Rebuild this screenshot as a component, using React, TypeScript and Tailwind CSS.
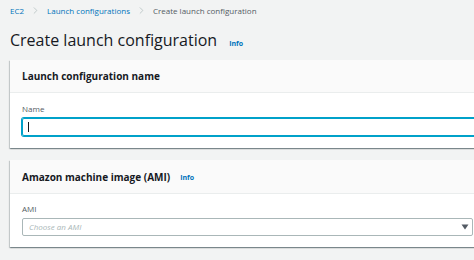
import { ChevronRight } from "lucide-react";

function Info() {
  return <span className="text-[7px] font-bold text-[#0073bb] leading-none">Info</span>;
}

const cardShadow =
  "bg-white shadow-[0_1px_1px_0_rgba(0,28,36,0.3),1px_1px_1px_0_rgba(0,28,36,0.15),-1px_1px_1px_0_rgba(0,28,36,0.15)]";

export default function App() {
  return (
    <div
      className="w-[474px] h-[260px] overflow-hidden bg-[#f2f3f3] text-[#16191f]"
      style={{ fontFamily: '"Open Sans", "Noto Sans", sans-serif' }}
    >
      <div className="w-[500px] pl-[10px]">
        {/* breadcrumbs */}
        <nav className="flex items-center gap-[6px] h-[21px] text-[8px] text-[#545b64]">
          <span className="text-[#0073bb]">EC2</span>
          <ChevronRight size={11} strokeWidth={1.5} className="text-[#aab7b8]" />
          <span className="text-[#0073bb]">Launch configurations</span>
          <ChevronRight size={11} strokeWidth={1.5} className="text-[#aab7b8]" />
          <span>Create launch configuration</span>
        </nav>

        {/* page header */}
        <div className="flex items-baseline gap-[12px] h-[39px] pt-[6px]">
          <h1 className="text-[16px] font-normal leading-[26px]">Create launch configuration</h1>
          <Info />
        </div>

        {/* launch configuration name */}
        <section className={`${cardShadow} mb-[12px]`}>
          <header className="h-[33px] px-[12px] flex items-center bg-[#fafafa] border-b border-[#eaeded]">
            <h2 className="text-[10px] font-bold">Launch configuration name</h2>
          </header>
          <div className="px-[12px] pt-[10px] pb-[12px]">
            <label className="block text-[8px] text-[#545b64] leading-[12px] mb-[3px]">Name</label>
            <div className="h-[18px] border border-[#00a1c9] rounded-[2px] shadow-[0_0_0_1px_#00a1c9] flex items-center pl-[5px]">
              <span className="w-px h-[10px] bg-[#16191f]" />
            </div>
          </div>
        </section>

        {/* AMI */}
        <section className={cardShadow}>
          <header className="h-[34px] px-[12px] pt-[2px] flex items-center gap-[10px] bg-[#fafafa] border-b border-[#eaeded]">
            <h2 className="text-[10px] font-bold">Amazon machine image (AMI)</h2>
            <Info />
          </header>
          <div className="px-[12px] pt-[9px] pb-[11px]">
            <label className="block text-[8px] text-[#545b64] leading-[12px] mb-[3px]">AMI</label>
            <div className="w-[451px] h-[18px] border border-[#aab7b8] rounded-[2px] flex items-center justify-between pl-[6px] pr-[3px]">
              <span className="text-[8px] italic text-[#aab7b8]">Choose an AMI</span>
              <svg width="8" height="6" viewBox="0 0 8 6" className="text-[#545b64]">
                <path d="M0.5 0.5h7L4 5.5z" fill="currentColor" />
              </svg>
            </div>
          </div>
        </section>
      </div>
    </div>
  );
}
